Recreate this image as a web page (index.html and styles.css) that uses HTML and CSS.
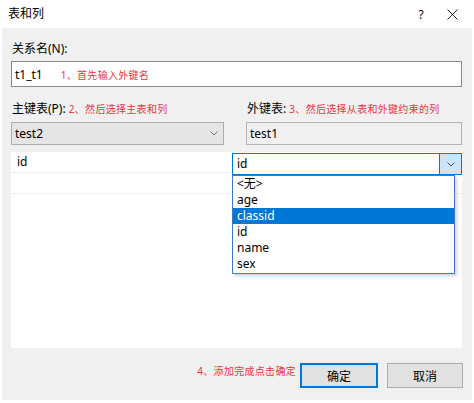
FILE: index.html
```html
<!DOCTYPE html>
<html lang="zh-CN">
<head>
<meta charset="utf-8">
<title>表和列</title>
<link rel="stylesheet" href="styles.css">
</head>
<body>
<div class="win">
  <div class="titlebar">
    <span class="title">表和列</span>
    <span class="help">?</span>
    <span class="close"><svg width="11" height="11" viewBox="0 0 11 11"><path d="M0.5 0.5 L10.5 10.5 M10.5 0.5 L0.5 10.5" stroke="#222" stroke-width="1" fill="none"/></svg></span>
  </div>
  <div class="body">
    <div class="label">关系名(N):</div>
    <div class="textbox name"><span>t1_t1</span><span class="note note1">1、首先输入外键名</span></div>
    <div class="tables">
      <div class="col">
        <div class="label">主键表(P): <span class="note">2、然后选择主表和列</span></div>
        <div class="combo"><span>test2</span><svg class="chev" width="8" height="5" viewBox="0 0 8 5"><path d="M0.5 0.5 L4 4 L7.5 0.5" stroke="#707070" stroke-width="1" fill="none"/></svg></div>
      </div>
      <div class="col">
        <div class="label">外键表: <span class="note">3、然后选择从表和外键约束的列</span></div>
        <div class="textbox ro">test1</div>
      </div>
    </div>
    <div class="grid">
      <div class="row">
        <div class="cell left">id</div>
        <div class="cell right">
          <div class="ecombo">
            <span class="ecombo-text">id</span>
            <span class="ecombo-btn"><svg width="8" height="5" viewBox="0 0 8 5"><path d="M0.5 0.5 L4 4 L7.5 0.5" stroke="#505050" stroke-width="1" fill="none"/></svg></span>
          </div>
          <ul class="dropdown">
            <li>&lt;无&gt;</li>
            <li>age</li>
            <li class="sel">classid</li>
            <li>id</li>
            <li>name</li>
            <li>sex</li>
          </ul>
        </div>
      </div>
      <div class="row"><div class="cell left"></div><div class="cell right"></div></div>
    </div>
    <div class="footer">
      <span class="note note4">4、添加完成点击确定</span>
      <button class="btn default">确定</button>
      <button class="btn cancel">取消</button>
    </div>
  </div>
</div>
</body>
</html>
```

FILE: styles.css
```css
* { box-sizing: border-box; }
html, body {
  margin: 0;
  padding: 0;
  background: #ffffff;
}
body {
  width: 474px;
  height: 403px;
  overflow: hidden;
  font-family: "Noto Sans", "Noto Sans CJK SC", sans-serif;
  font-size: 12px;
  color: #000;
}
.win {
  width: 474px;
}
.titlebar {
  height: 28px;
  display: flex;
  align-items: center;
  padding: 0 0 0 8px;
  background: #fff;
}
.title {
  flex: 1;
  font-size: 12px;
  line-height: 16px;
}
.help {
  font-size: 12px;
  width: 30px;
  text-align: center;
  margin-right: 11px;
}
.close {
  width: 11px;
  height: 11px;
  display: flex;
  margin-right: 16px;
}
.body {
  margin: 0 2px;
  background: #f0f0f0;
  padding: 13px 10px 12px 9px;
}
.label {
  line-height: 16px;
  height: 16px;
  white-space: nowrap;
  padding-left: 1px;
}
.note {
  color: #e8363f;
  font-size: 10px;
  letter-spacing: 0.3px;
}
.textbox {
  background: #fff;
  border: 1px solid #8a8a8a;
  display: flex;
  align-items: center;
  padding-left: 3px;
}
.textbox.name {
  margin-top: 4px;
  height: 26px;
}
.note1 {
  margin-left: 18px;
}
.tables {
  margin-top: 14px;
  display: grid;
  grid-template-columns: 213px 1fr;
  column-gap: 22px;
}
.combo, .textbox.ro {
  margin-top: 5px;
  height: 23px;
}
.combo {
  background: #e5e5e5;
  border: 1px solid #adadad;
  display: flex;
  align-items: center;
  justify-content: space-between;
  padding: 0 5px 0 3px;
}
.textbox.ro {
  background: #f0f0f0;
  border: 1px solid #b4b4b4;
}
.grid {
  margin-top: 7px;
  height: 196px;
  background: #fff;
}
.row {
  display: grid;
  grid-template-columns: 221px 1fr;
  height: 21px;
  border-bottom: 1px solid #f0f0f0;
}
.cell {
  line-height: 20px;
}
.cell.left {
  padding-left: 6px;
}
.cell.right {
  position: relative;
}
.ecombo {
  position: absolute;
  left: 0;
  top: 1px;
  right: 0;
  height: 22px;
  border: 1px solid #0078d7;
  background: #fff;
  display: flex;
  z-index: 2;
}
.ecombo-text {
  flex: 1;
  padding-left: 4px;
  line-height: 20px;
}
.ecombo-btn {
  width: 22px;
  background: #cce4f7;
  border-left: 1px solid #0078d7;
  display: flex;
  align-items: center;
  justify-content: center;
}
.dropdown {
  position: absolute;
  left: 0;
  top: 23px;
  width: 223px;
  margin: 0;
  padding: 0 0 1px 0;
  list-style: none;
  background: #fff;
  border: 1px solid #3d7bc4;
  box-shadow: 2px 2px 3px rgba(0,0,0,0.18);
  z-index: 3;
}
.dropdown li {
  height: 16px;
  line-height: 16px;
  padding-left: 4px;
}
.dropdown li.sel {
  background: #0078d7;
  color: #fff;
}
.footer {
  margin-top: 15px;
  margin-right: -1px;
  display: flex;
  justify-content: flex-end;
  align-items: center;
  height: 25px;
}
.note4 {
  margin-right: 4px;
  align-self: flex-start;
  line-height: 16px;
}
.btn {
  height: 25px;
  font-family: "Noto Sans CJK SC", "Noto Sans", sans-serif;
  font-size: 12px;
  background: #e1e1e1;
  border: 1px solid #adadad;
  padding: 0;
  color: #000;
}
.btn.default {
  width: 78px;
  border: 1px solid #0078d7;
  box-shadow: inset 0 0 0 1px #0078d7;
  margin-right: 9px;
}
.btn.cancel {
  width: 76px;
}
```
